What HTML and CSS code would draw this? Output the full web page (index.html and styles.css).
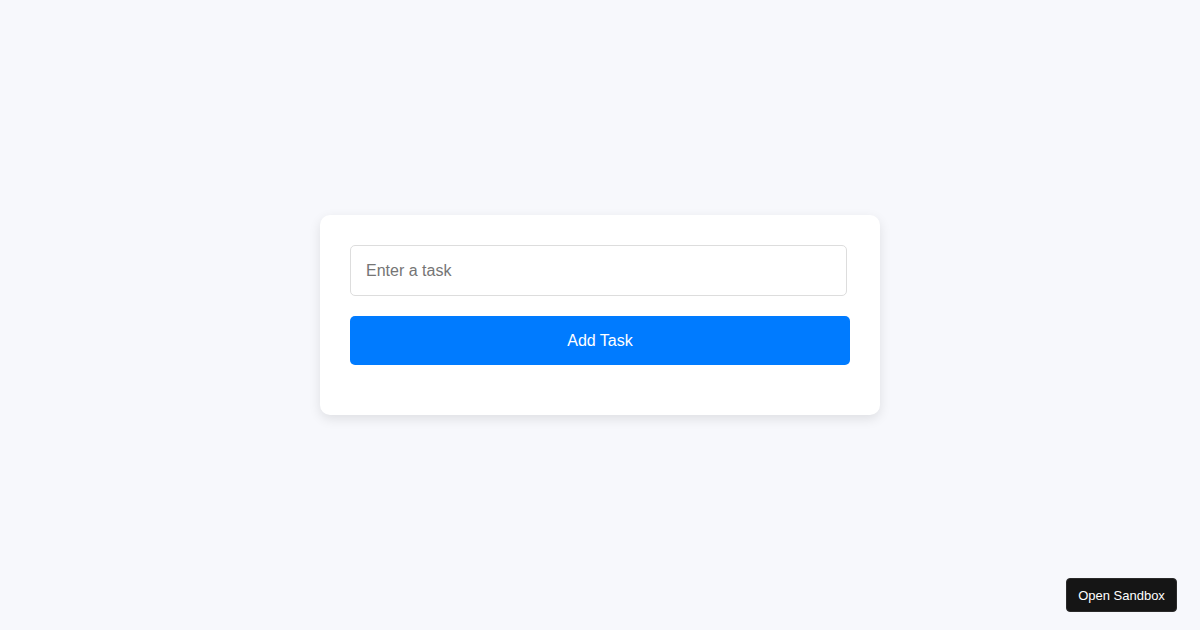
FILE: index.html
```html
<!DOCTYPE html>
<html>
<head>
<meta charset="utf-8">
<link rel="stylesheet" href="styles.css">
</head>
<body>
<main class="page">
  <div class="card">
    <input class="task-input" type="text" placeholder="Enter a task">
    <button class="add-btn">Add Task</button>
    <ul class="task-list"></ul>
  </div>
</main>
<a class="sandbox-btn">Open Sandbox</a>
</body>
</html>
```
FILE: styles.css
```css
html, body {
  margin: 0;
  padding: 0;
  height: 100%;
}
body {
  background: #f7f8fc;
  font-family: "Liberation Sans", Arial, sans-serif;
}
.page {
  height: 100%;
  display: flex;
  align-items: center;
  justify-content: center;
}
.card {
  width: 560px;
  box-sizing: border-box;
  background: #fff;
  border-radius: 10px;
  box-shadow: 0 4px 12px rgba(0, 0, 0, 0.1);
  padding: 30px 30px 30px;
  display: flex;
  flex-direction: column;
  align-items: flex-start;
}
.task-input {
  width: 497px;
  height: 51px;
  box-sizing: border-box;
  padding: 0 15px;
  border: 1px solid #ddd;
  border-radius: 5px;
  font-family: "Liberation Sans", Arial, sans-serif;
  font-size: 16px;
  color: #333;
  outline: none;
  margin: 0 0 20px;
}
.task-input::placeholder {
  color: #757575;
}
.add-btn {
  width: 100%;
  height: 49px;
  border: none;
  border-radius: 5px;
  background: #007bff;
  color: #fff;
  font-family: "Liberation Sans", Arial, sans-serif;
  font-size: 16px;
  cursor: pointer;
  margin: 0;
}
.task-list {
  list-style: none;
  margin: 20px 0 0;
  padding: 0;
}
.sandbox-btn {
  position: fixed;
  right: 23px;
  bottom: 18px;
  width: 111px;
  height: 34px;
  box-sizing: border-box;
  display: flex;
  align-items: center;
  justify-content: center;
  background: #151515;
  color: #fff;
  border-radius: 4px;
  font-size: 13px;
  border: 1px solid #2a2a2a;
}
```
